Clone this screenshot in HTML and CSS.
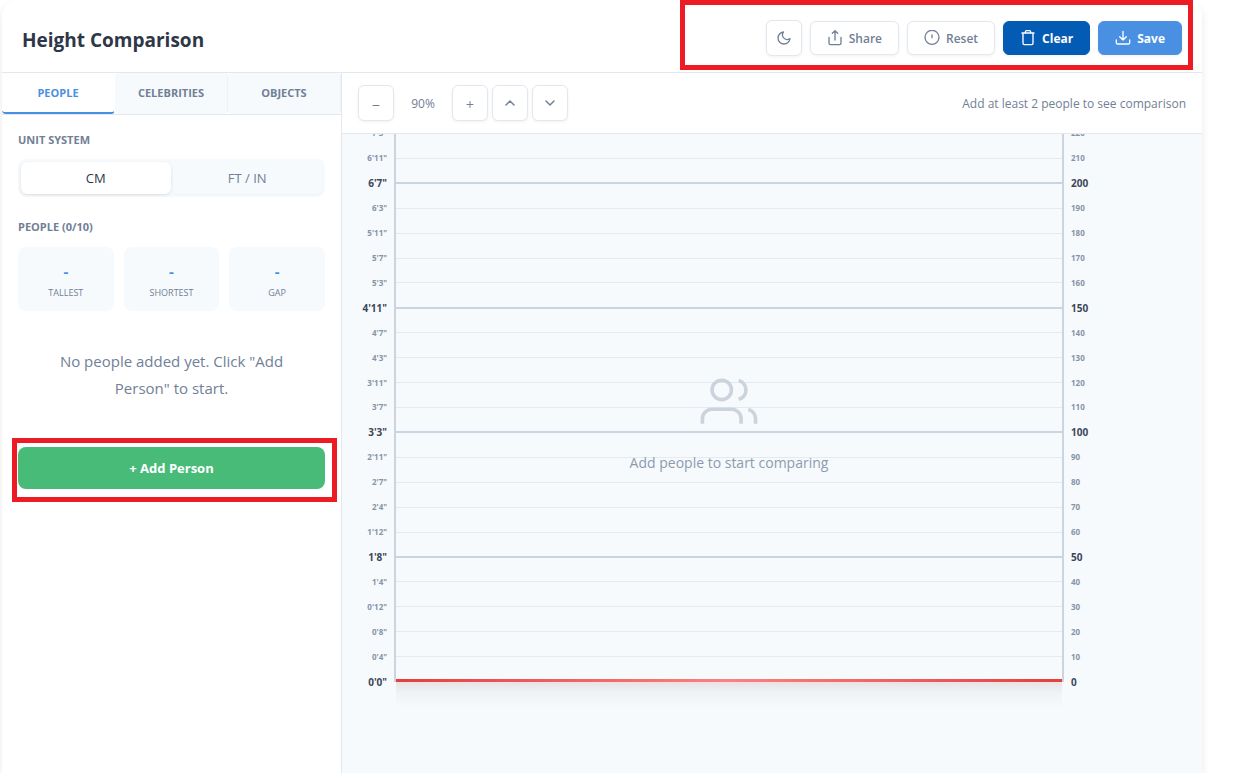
FILE: index.html
```
<!DOCTYPE html>
<html lang="en">
<head>
<meta charset="utf-8">
<title>Height Comparison</title>
<link rel="stylesheet" href="styles.css">
</head>
<body>
<div class="app">
  <header class="header">
    <h1 class="title">Height Comparison</h1>
    <div class="actions">
      <button class="icon-btn" type="button" aria-label="Toggle dark mode"><svg class="icon" viewBox="0 0 24 24"><path d="M21 12.8A9 9 0 1 1 11.2 3a7 7 0 0 0 9.8 9.8z"/></svg></button>
      <button class="btn" type="button"><svg class="icon" viewBox="0 0 24 24"><path d="M3 11v9a2 2 0 0 0 2 2h14a2 2 0 0 0 2-2v-9M8 5l4-4 4 4M12 1v14"/></svg>Share</button>
      <button class="btn" type="button"><svg class="icon" viewBox="0 0 24 24"><circle cx="12" cy="11" r="10.500"/><path d="M12 7.500v4"/></svg>Reset</button>
      <button class="btn btn-clear" type="button"><svg class="icon" viewBox="0 0 24 24"><path d="M3 4.500h18M4.500 4.500V20a2 2 0 0 0 2 2h11a2 2 0 0 0 2-2V4.500M8 4.500V3a2 2 0 0 1 2-2h4a2 2 0 0 1 2 2v1.500"/></svg>Clear</button>
      <button class="btn btn-save" type="button"><svg class="icon" viewBox="0 0 24 24"><path d="M2 15v4a2 2 0 0 0 2 2h16a2 2 0 0 0 2-2v-4M7 10l5 5 5-5M12 15V2"/></svg>Save</button>
      <div class="mark mark-actions"></div>
    </div>
  </header>
  <div class="body">
    <aside class="sidebar">
      <nav class="tabs">
        <button class="tab active" type="button">PEOPLE</button>
        <button class="tab" type="button">CELEBRITIES</button>
        <button class="tab" type="button">OBJECTS</button>
      </nav>
      <div class="panel">
        <h2 class="label">UNIT SYSTEM</h2>
        <div class="units">
          <button class="unit active" type="button">CM</button>
          <button class="unit" type="button">FT / IN</button>
        </div>
        <h2 class="label">PEOPLE (0/10)</h2>
        <div class="stats">
          <div class="stat"><span class="value">-</span><span class="name">TALLEST</span></div>
          <div class="stat"><span class="value">-</span><span class="name">SHORTEST</span></div>
          <div class="stat"><span class="value">-</span><span class="name">GAP</span></div>
        </div>
        <p class="none">No people added yet. Click "Add Person" to start.</p>
        <div class="add">
          <button class="add-btn" type="button">+ Add Person</button>
          <div class="mark mark-add"></div>
        </div>
      </div>
    </aside>
    <main class="main">
      <div class="toolbar">
        <button class="icon-btn" type="button" aria-label="Zoom out"><svg class="icon" viewBox="0 0 16 16"><path d="M5 10.500h6"/></svg></button>
        <span class="zoom">90%</span>
        <button class="icon-btn" type="button" aria-label="Zoom in"><svg class="icon" viewBox="0 0 16 16"><path d="M5 9.500h6M8 6.500v6"/></svg></button>
        <button class="icon-btn" type="button" aria-label="Move up"><svg class="icon bold" viewBox="0 0 16 16"><path d="M4 10l4-4 4 4"/></svg></button>
        <button class="icon-btn" type="button" aria-label="Move down"><svg class="icon bold" viewBox="0 0 16 16"><path d="M4 6l4 4 4-4"/></svg></button>
        <span class="hint">Add at least 2 people to see comparison</span>
      </div>
      <div class="chart">
        <div class="rows" id="rows"></div>
        <div class="empty">
          <svg class="people" viewBox="0 0 24 24"><path d="M17 21v-2a4 4 0 0 0-4-4H5a4 4 0 0 0-4 4v2M23 21v-2a4 4 0 0 0-3-3.870M16 3.130a4 4 0 0 1 0 7.750"/><circle cx="9" cy="7" r="4"/></svg>
          <p>Add people to start comparing</p>
        </div>
      </div>
    </main>
  </div>
</div>
<script src="chart.js"></script>
</body>
</html>
```
FILE: styles.css
```
* { box-sizing: border-box; margin: 0; }
body { background: #fff; font-family: "Open Sans", "Noto Sans", sans-serif; color: #2d3748; }
button { font-family: inherit; padding: 0; border: 0; background: none; }
.app { display: flex; flex-direction: column; height: 100vh; margin: 0 42px 0 2px; padding-top: 4px; border-radius: 16px 16px 0 0; box-shadow: 0 4px 8px rgba(0,0,0,.09); }
.header { display: flex; align-items: center; justify-content: space-between; padding: 16px 20px; border-bottom: 1px solid #e2e8f0; }
.title { padding-top: 4px; font-size: 19px; line-height: 28px; font-weight: 700; }
.actions { position: relative; display: flex; align-items: center; gap: 8px; }
.icon { width: 16px; height: 16px; fill: none; stroke: currentColor; stroke-width: 2; stroke-linecap: round; stroke-linejoin: round; }
.toolbar .icon { stroke-width: 1; }
.toolbar .icon.bold { stroke-width: 1.500; }
.icon-btn { display: flex; align-items: center; justify-content: center; width: 36px; height: 36px; border: 1px solid #e2e8f0; border-radius: 6px; background: #fff; color: #718096; box-shadow: 0 1px 3px rgba(0,0,0,.06); }
.btn { display: flex; align-items: center; gap: 6px; height: 34px; padding: 0 16px; border: 1px solid #e2e8f0; border-radius: 6px; background: #fff; color: #718096; font-size: 12px; font-weight: 600; box-shadow: 0 1px 3px rgba(0,0,0,.06); }
.btn-clear { background: #045bb4; border-color: #045bb4; color: #fff; font-weight: 700; }
.btn-save { background: #4a90e2; border-color: #4a90e2; color: #fff; font-weight: 700; }
.mark { position: absolute; border: 5px solid #ed1c24; pointer-events: none; }
.mark-actions { inset: -20px -11px -14px -86px; }
.mark-add { inset: -9px -12px -13px -6px; }
.body { display: flex; flex: 1; min-height: 0; }
.sidebar { width: 340px; flex: none; border-right: 1px solid #e2e8f0; }
.tabs { display: grid; grid-template-columns: repeat(3, 1fr); border-bottom: 1px solid #e2e8f0; }
.tab { height: 41px; border-right: 1px solid #edf2f7; border-bottom: 2px solid transparent; border-radius: 4px; background: #f6fafd; color: #718096; font-size: 11px; font-weight: 700; }
.tab.active { background: #fff; border-right-color: transparent; border-bottom-color: #4a90e2; color: #4a90e2; }
.panel { padding: 16px; }
.label { font-size: 11px; line-height: 18px; font-weight: 700; color: #718096; }
.units { display: grid; grid-template-columns: 1fr 1fr; gap: 2px; margin: 10px 0 21px; padding: 3px; border-radius: 8px; background: #f6fafd; }
.unit { height: 32px; border-radius: 6px; color: #718096; font-size: 13px; font-weight: 500; box-shadow: 0 1px 2px rgba(0,0,0,.03); }
.unit.active { background: #fff; color: #2d3748; box-shadow: 0 1px 3px rgba(0,0,0,.12); }
.stats { display: grid; grid-template-columns: repeat(3, 1fr); gap: 10px; margin-top: 11px; }
.stat { display: flex; flex-direction: column; align-items: center; gap: 2px; padding: 12px 8px 10px; border-radius: 8px; background: #f6fafd; }
.value { font-size: 15px; line-height: 24px; font-weight: 700; color: #4a90e2; }
.name { font-size: 9px; line-height: 16px; color: #718096; }
.none { padding: 37px 20px 45px; text-align: center; font-size: 15px; line-height: 27px; color: #718096; }
.add { position: relative; }
.add-btn { width: 100%; height: 42px; border-radius: 8px; background: #48bb78; color: #fff; font-size: 13px; font-weight: 700; }
.main { display: flex; flex: 1; flex-direction: column; min-width: 0; }
.toolbar { display: flex; align-items: center; gap: 4px; padding: 12px 16px; border-bottom: 1px solid #e2e8f0; }
.zoom { width: 50px; text-align: center; font-size: 12px; color: #718096; }
.hint { margin-left: auto; font-size: 12px; color: #718096; }
.chart { position: relative; flex: 1; display: flex; flex-direction: column; overflow: hidden; background: #f6fafd; }
.rows { display: grid; grid-auto-rows: 1fr; height: 573px; margin-top: -13px; flex: none; }
.row { display: grid; grid-template-columns: 45px 1fr 131px; align-items: center; column-gap: 7px; font-size: 8px; font-weight: 700; line-height: 12px; color: #8793a6; }
.row .ft { text-align: right; }
.row.major { font-size: 10px; color: #3d4656; }
.line { align-self: stretch; display: flex; align-items: center; border: solid #cbd5e0; border-width: 0 2px; }
.line::before { content: ""; flex: 1; height: 1px; background: #e5eaf0; }
.major .line::before { height: 2px; background: #cbd5e0; }
.base .line { position: relative; align-self: start; align-items: flex-end; height: 13px; }
.base .line::before { height: 3px; background: linear-gradient(90deg, #e53e3e, #fc8181, #e53e3e); }
.base .line::after { content: ""; position: absolute; top: 100%; left: 0; right: 0; height: 26px; background: linear-gradient(rgba(120,40,20,.11), rgba(0,0,0,.03) 40%, transparent); }
.empty { position: absolute; top: 239px; left: 52px; right: 138px; text-align: center; font-size: 14px; line-height: 22px; color: #8d9aae; }
.people { display: block; width: 58px; height: 58px; margin: 0 auto 21px; fill: none; stroke: #cbd3dc; stroke-width: 1.500; }
```
FILE: chart.js
```
const feet = ["0'0\"", "0'4\"", "0'8\"", "0'12\"", "1'4\"", "1'8\"", "1'12\"", "2'4\"", "2'7\"", "2'11\"", "3'3\"", "3'7\"",
  "3'11\"", "4'3\"", "4'7\"", "4'11\"", "5'3\"", "5'7\"", "5'11\"", "6'3\"", "6'7\"", "6'11\"", "7'3\""];
const rows = document.getElementById("rows");
for (let i = feet.length - 1; i >= 0; i--) {
  const row = document.createElement("div");
  row.className = "row" + (i % 5 === 0 ? " major" : "") + (i === 0 ? " base" : "");
  row.innerHTML = `<span class="ft">${feet[i]}</span><span class="line"></span><span class="cm">${i * 10}</span>`;
  rows.append(row);
}
```
